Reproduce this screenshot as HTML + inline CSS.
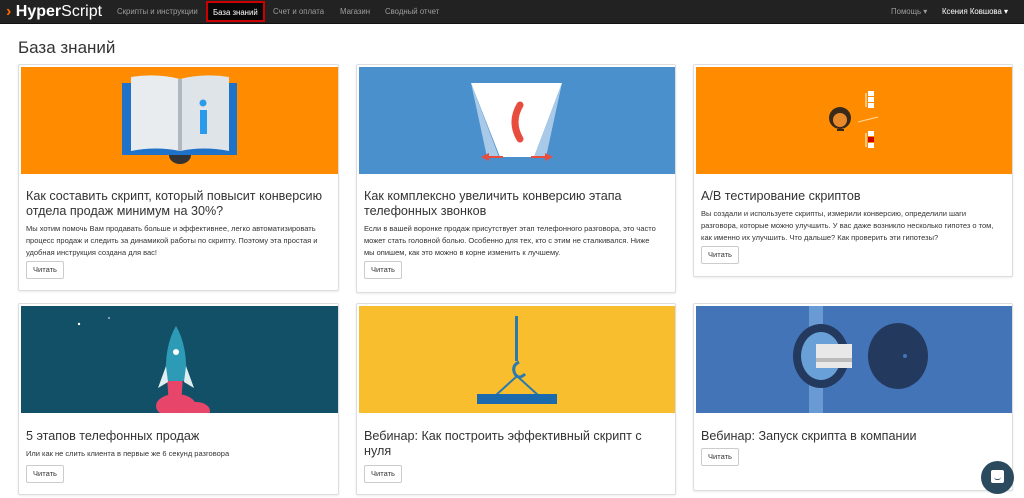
<!DOCTYPE html>
<html><head><meta charset="utf-8"><style>
*{margin:0;padding:0;box-sizing:border-box}
body{width:1024px;height:498px;overflow:hidden;background:#fff;font-family:"Liberation Sans",sans-serif;position:relative;color:#333}
.nav{position:absolute;left:0;top:0;width:1024px;height:24px;background:#222;border-bottom:1px solid #111}
.nav a{position:absolute;top:0;height:24px;line-height:23px;font-size:7.8px;color:#9d9d9d;white-space:nowrap}
.logo{position:absolute;left:6px;top:2px;font-size:16px;color:#fff;line-height:20px}
.logo b{font-weight:bold}
.act{background:#080808;color:#fff!important;border:2px solid #c00;line-height:19px!important;height:21px!important;top:1px!important;padding:0 5px}
h1{position:absolute;left:18px;top:38px;font-size:17px;font-weight:normal;color:#333}
.card{position:absolute;border:1px solid #ddd;border-radius:2px;background:#fff;box-shadow:0 1px 2px rgba(0,0,0,.08)}
.img{position:absolute;left:2px;top:2px;height:107px;overflow:hidden}
.t{position:absolute;left:7px;font-size:12.6px;line-height:15px;color:#333;white-space:nowrap}
.p{position:absolute;left:7px;font-size:7.5px;line-height:12px;color:#333;white-space:nowrap}
.btn{position:absolute;left:7px;width:38px;height:18px;border:1px solid #ccc;border-radius:2px;font-size:7.5px;line-height:16px;text-align:center;color:#333;background:#fff}
</style></head><body>
<div class="nav">
<div class="logo"><span style="color:#f60;font-weight:bold">›</span> <b>Hyper</b>Script</div>
<a style="left:117px">Скрипты и инструкции</a>
<a class="act" style="left:206px">База знаний</a>
<a style="left:273px">Счет и оплата</a>
<a style="left:340px">Магазин</a>
<a style="left:385px">Сводный отчет</a>
<a style="left:891px">Помощь ▾</a>
<a style="left:942px;color:#fff">Ксения Ковшова ▾</a>
</div>
<h1>База знаний</h1>

<div class="card" style="left:18px;top:64px;width:321px;height:227px">
<div class="img" style="width:317px;background:#ff8c00"><svg width="317" height="107">
<rect x="101" y="16" width="115" height="72" fill="#1e73c8"/><path d="M148 88a11 9 0 0 0 22 0z" fill="#333"/>
<path d="M110 10q25-4 49 2v72q-24-5-49 0z" fill="#e8ecef"/><path d="M159 12q24-6 49-2v74q-25-5-49 0z" fill="#dfe4e8"/>
<rect x="157" y="12" width="4" height="72" fill="#b0b8bf"/>
<circle cx="182" cy="36" r="3.5" fill="#2a9bea"/><rect x="179" y="43" width="7" height="24" fill="#2a9bea"/></svg></div>
<div class="t" style="top:124px">Как составить скрипт, который повысит конверсию<br>отдела продаж минимум на 30%?</div>
<div class="p" style="top:158px">Мы хотим помочь Вам продавать больше и эффективнее, легко автоматизировать<br>процесс продаж и следить за динамикой работы по скрипту. Поэтому эта простая и<br>удобная инструкция создана для вас!</div>
<div class="btn" style="top:196px">Читать</div>
</div>

<div class="card" style="left:356px;top:64px;width:320px;height:229px">
<div class="img" style="width:316px;background:#4a90cd"><svg width="316" height="107">
<path d="M112 16h91l-28 74h-34z" fill="#fff"/><path d="M112 16l28 74h-12z" fill="#a9c9e8"/><path d="M203 16l-28 74h12z" fill="#a9c9e8"/>
<path d="M161 38Q151 55 161 72" stroke="#e84c3d" stroke-width="7" stroke-linecap="round" fill="none"/>
<path d="M122 90l8-4v8zM130 89h14v2h-14zM194 90l-8-4v8zM172 89h14v2h-14z" fill="#e84c3d"/></svg></div>
<div class="t" style="top:124px">Как комплексно увеличить конверсию этапа<br>телефонных звонков</div>
<div class="p" style="top:158px">Если в вашей воронке продаж присутствует этап телефонного разговора, это часто<br>может стать головной болью. Особенно для тех, кто с этим не сталкивался. Ниже<br>мы опишем, как это можно в корне изменить к лучшему.</div>
<div class="btn" style="top:196px">Читать</div>
</div>

<div class="card" style="left:693px;top:64px;width:320px;height:213px">
<div class="img" style="width:316px;background:#ff8c00"><svg width="316" height="107">
<circle cx="144" cy="51" r="11" fill="#3a2a1a"/><circle cx="144" cy="53" r="7" fill="#e88a2a"/>
<rect x="141" y="62" width="7" height="2" fill="#3a2a1a"/>
<path d="M162 55l20-5" stroke="#ffd9a0" stroke-width="1"/>
<rect x="172" y="24" width="6" height="5" fill="#fff"/><rect x="172" y="30" width="6" height="5" fill="#fff"/><rect x="172" y="36" width="6" height="5" fill="#fff"/>
<rect x="172" y="64" width="6" height="5" fill="#fff"/><rect x="172" y="70" width="6" height="5" fill="#c00"/><rect x="172" y="76" width="6" height="5" fill="#fff"/>
<path d="M170 26v14M170 66v14" stroke="#fff"/></svg></div>
<div class="t" style="top:124px">A/B тестирование скриптов</div>
<div class="p" style="top:143px">Вы создали и используете скрипты, измерили конверсию, определили шаги<br>разговора, которые можно улучшить. У вас даже возникло несколько гипотез о том,<br>как именно их улучшить. Что дальше? Как проверить эти гипотезы?</div>
<div class="btn" style="top:181px">Читать</div>
</div>

<div class="card" style="left:18px;top:303px;width:321px;height:192px">
<div class="img" style="width:317px;background:#125068"><svg width="317" height="107">
<circle cx="58" cy="18" r="1.2" fill="#fff"/><circle cx="88" cy="12" r=".8" fill="#fff"/><circle cx="150" cy="40" r=".8" fill="#fff"/>
<ellipse cx="155" cy="100" rx="20" ry="12" fill="#e8456a"/><ellipse cx="175" cy="105" rx="14" ry="9" fill="#e8456a"/><path d="M146 70h16l-2 30h-12z" fill="#e8456a"/>
<path d="M155 20q-12 20-10 55h20q2-35-10-55z" fill="#2d9bb5"/><circle cx="155" cy="46" r="3" fill="#fff"/>
<path d="M145 60l-8 22 10-6zM165 60l8 22-10-6z" fill="#e0eef2"/></svg></div>
<div class="t" style="top:125px">5 этапов телефонных продаж</div>
<div class="p" style="top:144px">Или как не слить клиента в первые же 6 секунд разговора</div>
<div class="btn" style="top:161px">Читать</div>
</div>

<div class="card" style="left:356px;top:303px;width:320px;height:192px">
<div class="img" style="width:316px;background:#f8be2e"><svg width="316" height="107">
<rect x="156" y="10" width="3" height="45" fill="#2a7ab0"/><path d="M160 56q-8 4-4 12q4 6 10 0" stroke="#2a7ab0" stroke-width="3" fill="none"/>
<path d="M158 70l-22 20M158 70l22 20" stroke="#2a7ab0" stroke-width="2"/>
<rect x="118" y="88" width="80" height="10" fill="#1b6aae"/></svg></div>
<div class="t" style="top:125px">Вебинар: Как построить эффективный скрипт с<br>нуля</div>
<div class="btn" style="top:161px">Читать</div>
</div>

<div class="card" style="left:693px;top:303px;width:320px;height:188px">
<div class="img" style="width:316px;background:#4474b8"><svg width="316" height="107">
<rect x="113" y="0" width="14" height="107" fill="#6a9ad4"/>
<ellipse cx="202" cy="50" rx="30" ry="33" fill="#233a5e"/>
<ellipse cx="125" cy="50" rx="28" ry="32" fill="#233a5e"/><ellipse cx="125" cy="50" rx="20" ry="24" fill="#6aa0d8"/>
<rect x="120" y="38" width="36" height="24" fill="#e8e8e8"/><rect x="120" y="52" width="36" height="4" fill="#bbb"/>
<circle cx="209" cy="50" r="2" fill="#4474b8"/></svg></div>
<div class="t" style="top:125px">Вебинар: Запуск скрипта в компании</div>
<div class="btn" style="top:144px">Читать</div>
</div>

<div style="position:absolute;left:981px;top:461px;width:33px;height:33px;border-radius:50%;background:#2c4a5e"><div style="position:absolute;left:10px;top:9px;width:13px;height:13px;background:#fff;border-radius:2px"></div><div style="position:absolute;left:13px;top:16px;width:7px;height:3px;border-bottom:1px solid #2c4a5e;border-radius:0 0 4px 4px"></div></div>
</body></html>
